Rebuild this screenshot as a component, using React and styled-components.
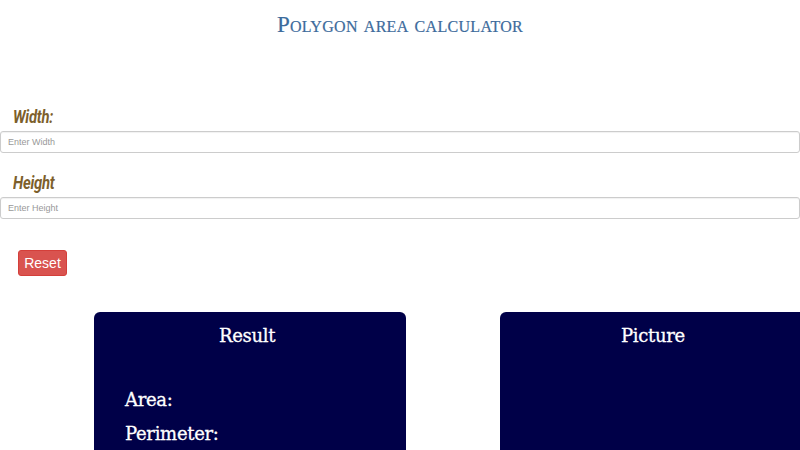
import React from 'react'
import styled, { createGlobalStyle } from 'styled-components'

const Global = createGlobalStyle`
    html, body {
        margin: 0;
        padding: 0;
        background: #fff;
        overflow: hidden;
    }
`;

const Page = styled.div`
    width: 800px;
    height: 450px;
    overflow: hidden;
`;

const Title = styled.h1`
    margin: 0;
    padding-top: 9px;
    text-align: center;
    font-family: "Liberation Serif", serif;
    font-variant: small-caps;
    font-weight: normal;
    font-size: 23px;
    letter-spacing: 0.3px;
    color: #3d6b9c;
    line-height: 32px;
    -webkit-text-stroke: 0.2px #3d6b9c;
`;

const Form = styled.div`
    margin-top: 66px;
`;

const Field = styled.div`
    display: flex;
    flex-direction: column;
    align-items: flex-start;
    gap: 4px;
    margin-bottom: 20px;
`;

const Label = styled.label`
    display: inline-block;
    margin-left: 13px;
    font-family: Roboto, sans-serif;
    font-style: italic;
    font-weight: bold;
    font-size: 19px;
    letter-spacing: -0.3px;
    color: #7d5f2c;
    line-height: 20px;
    transform: scaleX(0.78);
    transform-origin: left center;
`;

const Input = styled.input`
    display: block;
    box-sizing: border-box;
    width: 800px;
    height: 22px;
    margin: 0;
    padding: 0 7px;
    border: 1px solid #ccc;
    border-radius: 3px;
    font-family: "Liberation Sans", sans-serif;
    font-size: 9px;
    color: #555;
    box-shadow: inset 0 1px 1px rgba(0,0,0,0.06);

    &::placeholder {
        color: #999;
    }
`;

const ResetButton = styled.button`
    margin: 11px 0 0 18px;
    width: 49px;
    height: 26px;
    padding: 0;
    border: 1px solid #d43f3a;
    border-radius: 3px;
    background: #d9534f;
    color: #fff;
    font-family: "Liberation Sans", sans-serif;
    font-size: 14px;
`;

const CardRow = styled.div`
    display: flex;
    gap: 94px;
    margin-top: 36px;
    padding-left: 94px;
    width: 900px;
`;

const Card = styled.div`
    flex: 0 0 312px;
    height: 200px;
    background: #000048;
    border-radius: 6px;
    color: #fff;
    font-family: "DejaVu Serif", serif;
    box-sizing: border-box;
    padding-top: 12px;
    -webkit-text-stroke: 0.3px #fff;
`;

const CardTitle = styled.h2`
    margin: 0;
    padding-right: 6px;
    text-align: center;
    font-weight: normal;
    font-size: 18px;
    letter-spacing: -0.3px;
    line-height: 24px;
`;

const Stats = styled.div`
    margin-top: 40px;
    padding-left: 31px;
    display: flex;
    flex-direction: column;
    gap: 10px;
`;

const Stat = styled.div`
    font-size: 18px;
    letter-spacing: -0.3px;
    line-height: 24px;
`;

function App() {
    return (
        <Page>
            <Global />
            <Title>Polygon area calculator</Title>
            <Form>
                <Field>
                    <Label>Width:</Label>
                    <Input placeholder="Enter Width" />
                </Field>
                <Field>
                    <Label>Height</Label>
                    <Input placeholder="Enter Height" />
                </Field>
                <ResetButton>Reset</ResetButton>
            </Form>
            <CardRow>
                <Card>
                    <CardTitle>Result</CardTitle>
                    <Stats>
                        <Stat>Area:</Stat>
                        <Stat>Perimeter:</Stat>
                    </Stats>
                </Card>
                <Card>
                    <CardTitle>Picture</CardTitle>
                </Card>
            </CardRow>
        </Page>
    )
}

export default App
